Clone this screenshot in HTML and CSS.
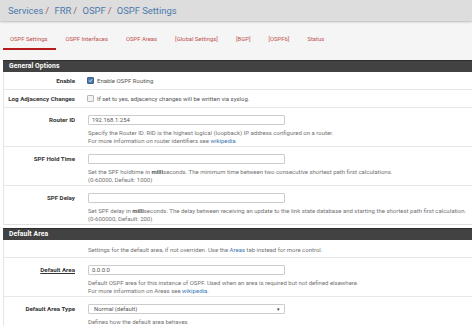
FILE: index.html
```html
<!DOCTYPE html>
<html lang="en">
<head>
    <meta charset="UTF-8">
    <title>Services / FRR / OSPF / OSPF Settings</title>
    <link rel="stylesheet" href="styles.css">
</head>
<body>
    <div class="page">
        <div class="topbar">
            <span class="crumb">Services</span><span class="sep">/</span>
            <span class="crumb">FRR</span><span class="sep">/</span>
            <span class="crumb">OSPF</span><span class="sep">/</span>
            <span class="crumb">OSPF Settings</span>
        </div>

        <div class="tabs">
            <div class="tab active">OSPF Settings</div>
            <div class="tab">OSPF Interfaces</div>
            <div class="tab">OSPF Areas</div>
            <div class="tab">[Global Settings]</div>
            <div class="tab">[BGP]</div>
            <div class="tab">[OSPF6]</div>
            <div class="tab">Status</div>
        </div>

        <div class="panel">
            <div class="panel-heading">General Options</div>

            <div class="row short">
                <div class="label">Enable</div>
                <div class="field inline">
                    <span class="check on"><svg viewBox="0 0 6 6"><path d="M1.2 3.1 L2.5 4.4 L4.9 1.6" fill="none" stroke="#fff" stroke-width="1"/></svg></span>
                    <span class="text">Enable OSPF Routing</span>
                </div>
            </div>

            <div class="row short">
                <div class="label">Log Adjacency Changes</div>
                <div class="field inline">
                    <span class="check"></span>
                    <span class="text">If set to yes, adjacency changes will be written via syslog.</span>
                </div>
            </div>

            <div class="row">
                <div class="label">Router ID</div>
                <div class="field">
                    <div class="input">192.168.1.254</div>
                    <div class="help">
                        Specify the Router ID. RID is the highest logical (loopback) IP address configured on a router.<br>
                        For more information on router identifiers see <a>wikipedia</a>.
                    </div>
                </div>
            </div>

            <div class="row">
                <div class="label">SPF Hold Time</div>
                <div class="field">
                    <div class="input"></div>
                    <div class="help">
                        Set the SPF holdtime in <b>milli</b>seconds. The minimum time between two consecutive shortest path first calculations.<br>
                        (0-60000, Default: 1000)
                    </div>
                </div>
            </div>

            <div class="row">
                <div class="label">SPF Delay</div>
                <div class="field">
                    <div class="input"></div>
                    <div class="help">
                        Set SPF delay in <b>milli</b>seconds. The delay between receiving an update to the link state database and starting the shortest path first calculation.<br>
                        (0-600000, Default: 200)
                    </div>
                </div>
            </div>
        </div>

        <div class="panel">
            <div class="panel-heading">Default Area</div>

            <div class="row short">
                <div class="label"></div>
                <div class="field inline">
                    <span class="help">Settings for the default area, if not overriden. Use the <a>Areas</a> tab instead for more control.</span>
                </div>
            </div>

            <div class="row">
                <div class="label"><u>Default Area</u></div>
                <div class="field">
                    <div class="input">0.0.0.0</div>
                    <div class="help">
                        Default OSPF area for this instance of OSPF. Used when an area is required but not defined elsewhere.<br>
                        For more information on Areas see <a>wikipedia</a>.
                    </div>
                </div>
            </div>

            <div class="row">
                <div class="label">Default Area Type</div>
                <div class="field">
                    <div class="input select">Normal (default)<span class="caret">&#9662;</span></div>
                    <div class="help">Defines how the default area behaves</div>
                </div>
            </div>
        </div>
    </div>
</body>
</html>
```

FILE: styles.css
```css
body {
    margin: 0;
    background: #ffffff;
    font-family: Roboto, "Liberation Sans", sans-serif;
    color: #333333;
}
.page {
    width: 472px;
    height: 326px;
    overflow: hidden;
}
.topbar {
    height: 21px;
    line-height: 22px;
    padding-left: 8px;
    background: #dddddd;
    box-shadow: 0 1px 2px rgba(0, 0, 0, 0.25);
    font-size: 9.4px;
    position: relative;
}
.crumb {
    color: #4a78ab;
}
.sep {
    color: #9a5a5a;
    margin: 0 3px 0 2px;
}
.tabs {
    height: 30px;
    padding: 9px 0 0 3px;
    background: #f5f5f5;
    display: flex;
    align-items: flex-start;
}
.tab {
    padding: 0 8px 0 7px;
    height: 18px;
    line-height: 18px;
    font-size: 5.9px;
    color: #c0504d;
    border-bottom: 2px solid transparent;
    margin-right: 3px;
}
.tab.active {
    border-bottom-color: #b71c1c;
}
.panel {
    margin-left: 3px;
    border-left: 1px solid #e6e6e6;
    border-bottom: 1px solid #e0e0e0;
}
.panel + .panel {
    margin-top: 3px;
}
.panel-heading {
    height: 11px;
    line-height: 11px;
    padding-left: 6px;
    margin-left: -1px;
    background: #424242;
    border-top: 1px solid #2e2e2e;
    color: #ffffff;
    font-size: 6.8px;
    font-weight: bold;
    letter-spacing: 0.1px;
}
.row {
    display: flex;
    padding: 7px 0 1px;
    border-bottom: 1px solid #e8e8e8;
}
.row:last-child {
    border-bottom: none;
}
.row.short {
    height: 17px;
    padding: 0;
    align-items: center;
}
.label {
    width: 71px;
    text-align: right;
    font-size: 6.2px;
    font-weight: bold;
    line-height: 10px;
    color: #333333;
}
.field {
    margin-left: 13px;
    flex: 1;
}
.field.inline {
    display: flex;
    align-items: center;
}
.check {
    width: 5px;
    height: 5px;
    border: 1px solid #b5b5b5;
    background: #f3f3f3;
    border-radius: 1px;
    margin-left: -1px;
    display: flex;
}
.check.on {
    background: #4f77a6;
    border-color: #3e6290;
}
.check svg {
    width: 5px;
    height: 5px;
}
.text {
    margin-left: 3px;
    font-size: 6px;
    color: #555555;
}
.input {
    width: 192px;
    height: 8px;
    border: 1px solid #cccccc;
    border-radius: 1px;
    padding-left: 3px;
    font-size: 5.9px;
    line-height: 8px;
    color: #555555;
    position: relative;
}
.select {
    width: 190px;
    padding-left: 5px;
}
.caret {
    position: absolute;
    right: 4px;
    top: 0;
    font-size: 5px;
    color: #333333;
}
.help {
    margin-top: 4px;
    font-size: 6px;
    line-height: 8px;
    color: #737373;
}
.field.inline .help {
    margin-top: 3px;
}
.help b {
    color: #555555;
}
a {
    color: #3b78b6;
}
```
